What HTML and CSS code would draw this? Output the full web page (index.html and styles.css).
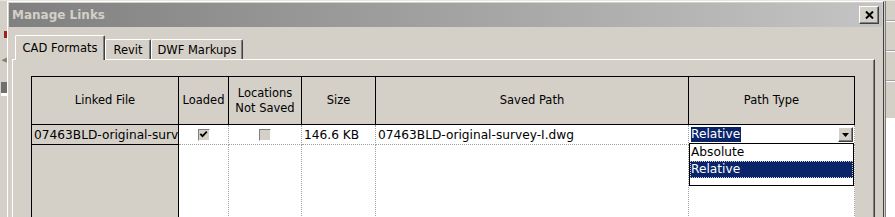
FILE: index.html
```html
<!DOCTYPE html>
<html lang="en">
<head>
    <meta charset="UTF-8">
    <title>Manage Links</title>
    <link rel="stylesheet" href="styles.css">
</head>
<body>
    <div class="screen">
        <div class="app-left">
            <span class="app-mark red"></span>
            <span class="app-mark arrow">&#9664;</span>
            <span class="app-mark block"></span>
        </div>

        <div class="dialog">
            <div class="titlebar">
                <span class="title">Manage Links</span>
                <div class="close-btn">
                    <svg width="9" height="8" viewBox="0 0 9 8">
                        <path d="M1 0.5 L8 7.5 M8 0.5 L1 7.5" stroke="#000" stroke-width="2" fill="none"/>
                    </svg>
                </div>
            </div>

            <div class="dialog-body">
                <div class="tabs">
                    <div class="tab active tab-cad">CAD Formats</div>
                    <div class="tab tab-revit">Revit</div>
                    <div class="tab tab-dwf">DWF Markups</div>
                </div>

                <div class="tab-panel">
                    <div class="grid">
                        <div class="head">Linked File</div>
                        <div class="head">Loaded</div>
                        <div class="head">Locations<br>Not Saved</div>
                        <div class="head">Size</div>
                        <div class="head">Saved Path</div>
                        <div class="head">Path Type</div>

                        <div class="cell rowhead">07463BLD-original-survey-I.dwg</div>
                        <div class="cell center">
                            <span class="check">
                                <svg width="9" height="9" viewBox="0 0 9 9">
                                    <path d="M1.3 3.8 L3.5 6.2 L7.8 1.6" stroke="#000" stroke-width="1.8" fill="none"/>
                                </svg>
                            </span>
                        </div>
                        <div class="cell center"><span class="check"></span></div>
                        <div class="cell">146.6 KB</div>
                        <div class="cell">07463BLD-original-survey-I.dwg</div>
                        <div class="cell combo-cell">
                            <span class="combo-value">Relative</span>
                            <span class="combo-btn">
                                <svg width="7" height="4" viewBox="0 0 7 4"><path d="M0 0 H7 L3.5 4 Z" fill="#000"/></svg>
                            </span>
                            <div class="dropdown">
                                <div class="option">Absolute</div>
                                <div class="option selected">Relative</div>
                            </div>
                        </div>

                        <div class="filler rowhead"></div>
                        <div class="filler"></div>
                        <div class="filler"></div>
                        <div class="filler"></div>
                        <div class="filler"></div>
                        <div class="filler"></div>
                    </div>
                </div>
            </div>
        </div>

        <div class="app-right">
            <div class="band"></div>
            <div class="band"></div>
            <div class="band"></div>
            <div class="band tall"></div>
            <div class="white-area"></div>
        </div>
    </div>
</body>
</html>
```

FILE: styles.css
```css
* {
    margin: 0;
    padding: 0;
    box-sizing: border-box;
    font-family: "DejaVu Sans", Verdana, sans-serif;
}

body {
    background-color: #d4d0c8;
    width: 895px;
    height: 217px;
    overflow: hidden;
    font-size: 11.5px;
    color: #000;
}

.screen {
    display: flex;
    height: 217px;
    border-top: 1px solid #e8e6e0;
}

/* bits of the application behind the dialog */
.app-left {
    width: 7px;
    display: flex;
    flex-direction: column;
    align-items: flex-end;
    padding-top: 30px;
    gap: 18px;
}

.app-mark {
    display: block;
}

.app-mark.red {
    width: 3px;
    height: 7px;
    background-color: #a02020;
}

.app-mark.arrow {
    font-size: 7px;
    color: #808080;
    line-height: 8px;
}

.app-mark.block {
    width: 6px;
    height: 14px;
    background-color: #707070;
    border-bottom: 3px solid #fff;
}

.dialog {
    width: 877px;
    border-top: 1px solid #fff;
    border-left: 1px solid #fff;
    border-right: 1px solid #404040;
    padding: 1px 1px 0 1px;
    background-color: #d4d0c8;
}

.titlebar {
    height: 24px;
    display: flex;
    align-items: center;
    justify-content: space-between;
    padding-left: 3px;
    background: linear-gradient(to right, #808080, #c4c4c4);
}

.title {
    font-weight: bold;
    font-size: 12px;
    color: #d4d0c8;
}

.close-btn {
    width: 20px;
    height: 18px;
    margin-right: 3px;
    background-color: #d4d0c8;
    border-top: 1px solid #fff;
    border-left: 1px solid #fff;
    border-right: 1px solid #404040;
    border-bottom: 1px solid #404040;
    box-shadow: inset -1px -1px #808080;
    display: flex;
    align-items: center;
    justify-content: center;
}

.dialog-body {
    padding: 8px 7px 0 3px;
}

.tabs {
    display: flex;
    align-items: flex-end;
    height: 25px;
    padding-left: 3px;
    position: relative;
    z-index: 1;
}

.tab {
    height: 20px;
    margin-bottom: 1px;
    background-color: #d4d0c8;
    border-top: 1px solid #fff;
    border-left: 1px solid #fff;
    border-right: 1px solid #404040;
    box-shadow: inset -1px 0 #808080;
    border-radius: 2px 2px 0 0;
    display: flex;
    align-items: center;
    justify-content: center;
    padding-top: 1px;
}

.tab.active {
    height: 25px;
    margin-bottom: 0;
    padding-bottom: 1px;
}

.tab-cad {
    width: 90px;
}

.tab-revit {
    width: 46px;
}

.tab-dwf {
    width: 92px;
}

.tab-panel {
    margin-top: -1px;
    height: 158px;
    border-top: 1px solid #fff;
    border-left: 1px solid #fff;
    border-right: 1px solid #404040;
    box-shadow: inset -1px 0 #808080;
    padding: 16px 18px 0 18px;
}

.grid {
    display: grid;
    grid-template-columns: 147px 50px 73px 74px 313px 166px;
    grid-template-rows: 48px 20px 73px;
    width: 824px;
    border-left: 1px solid #000;
    border-top: 1px solid #000;
}

.head {
    background-color: #d4d0c8;
    border-right: 1px solid #000;
    border-bottom: 1px solid #000;
    display: flex;
    align-items: center;
    justify-content: center;
    text-align: center;
    line-height: 15px;
}

.cell {
    background-color: #fff;
    border-right: 1px dotted #a0a0a0;
    border-bottom: 1px dotted #a0a0a0;
    padding-left: 2px;
    font-size: 12.2px;
    display: flex;
    align-items: center;
    white-space: nowrap;
    overflow: hidden;
}

.cell.center {
    justify-content: center;
    padding-left: 0;
}

.rowhead {
    background-color: #d4d0c8;
    border-right: 1px solid #000;
}

.cell.rowhead {
    border-bottom: 1px solid #000;
}

.filler {
    background-color: #fff;
    border-right: 1px dotted #a0a0a0;
}

.filler.rowhead {
    background-color: #d4d0c8;
    border-right: 1px solid #000;
}

.check {
    width: 12px;
    height: 12px;
    background-color: #d4d0c8;
    border-top: 1px solid #808080;
    border-left: 1px solid #808080;
    border-right: 1px solid #fff;
    border-bottom: 1px solid #fff;
    display: flex;
    align-items: center;
    justify-content: center;
}

.combo-cell {
    position: relative;
    overflow: visible;
    justify-content: space-between;
    padding: 0 1px 0 2px;
}

.combo-value {
    background-color: #0a246a;
    color: #fff;
    line-height: 15px;
    padding: 0 1px 0 0;
}

.combo-btn {
    width: 15px;
    height: 15px;
    background-color: #d4d0c8;
    border-top: 1px solid #fff;
    border-left: 1px solid #fff;
    border-right: 1px solid #404040;
    border-bottom: 1px solid #404040;
    box-shadow: inset -1px -1px #808080;
    display: flex;
    align-items: center;
    justify-content: center;
}

.dropdown {
    position: absolute;
    top: 18px;
    left: 0;
    width: 165px;
    height: 43px;
    background-color: #fff;
    border: 1px solid #000;
    z-index: 2;
}

.option {
    height: 17px;
    line-height: 16px;
    padding-left: 1px;
    font-size: 12.2px;
}

.option.selected {
    background-color: #0a246a;
    color: #fff;
    outline: 1px dotted #d4d0c8;
    outline-offset: -1px;
}

.app-right {
    flex: 1;
    display: flex;
    flex-direction: column;
    border-left: 1px solid #808080;
    margin-left: 1px;
}

.band {
    height: 30px;
    border-bottom: 1px solid #a0a0a0;
    box-shadow: 0 1px #fff;
}

.band:first-child {
    height: 20px;
}

.band.tall {
    height: 37px;
    border-bottom: none;
    box-shadow: none;
}

.white-area {
    flex: 1;
    background-color: #fff;
}
```
